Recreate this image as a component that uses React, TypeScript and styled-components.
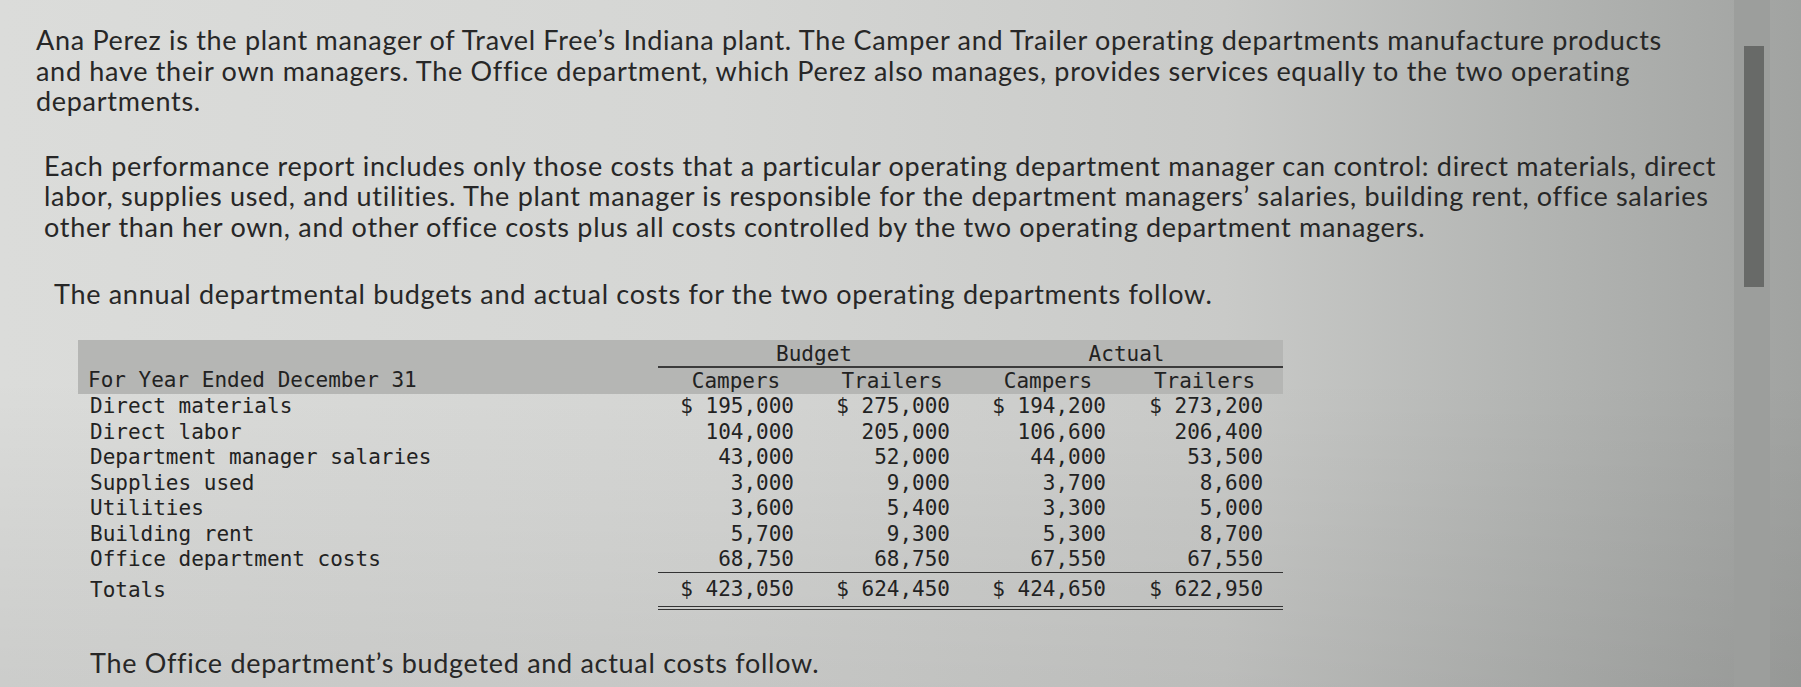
import styled, { createGlobalStyle } from 'styled-components';

const GlobalStyle = createGlobalStyle`
  html, body {
    margin: 0;
    padding: 0;
    overflow: hidden;
  }
`;

const Page = styled.div`
  width: 1801px;
  height: 687px;
  display: flex;
  background:
    linear-gradient(180deg, rgba(0, 0, 0, 0) 55%, rgba(0, 0, 0, 0.07) 100%),
    linear-gradient(90deg, #dbdcda 0%, #d5d6d4 40%, #c9cac8 68%, #b3b5b3 85%, #a1a3a1 100%);
  color: #262626;
`;

const Main = styled.div`
  flex: 1;
  padding: 25px 0 0 36px;
`;

const Paragraph = styled.p<{ $indent: number; $gap: number }>`
  margin: ${(p) => p.$gap}px 0 0 ${(p) => p.$indent}px;
  font-family: Lato, 'Open Sans', sans-serif;
  font-size: 27px;
  letter-spacing: 0.7px;
  line-height: 30.5px;
  white-space: nowrap;
  color: #272727;
`;

const ReportTable = styled.table`
  margin: 30px 0 0 42px;
  width: 1205px;
  table-layout: fixed;
  border-collapse: collapse;
  font-family: 'DejaVu Sans Mono', 'Liberation Mono', monospace;
  font-size: 21px;
  color: #222;
`;

const HeadRow = styled.tr`
  height: 27px;
  background: #b5b6b4;
`;

const GroupCell = styled.th`
  font-weight: normal;
  text-align: center;
  padding: 0;
  border-bottom: 2px solid #3b3b3b;
  vertical-align: bottom;
`;

const ColumnCell = styled.th`
  font-weight: normal;
  text-align: center;
  padding: 0;
`;

const CaptionCell = styled.th`
  font-weight: normal;
  text-align: left;
  padding: 0 0 0 10px;
  white-space: nowrap;
`;

const Row = styled.tr<{ $total?: boolean }>`
  height: ${(p) => (p.$total ? 36 : 25.5)}px;
`;

const Label = styled.td`
  padding: 0 0 0 12px;
  white-space: nowrap;
`;

const Amount = styled.td<{ $total?: boolean }>`
  padding: 0 20px 0 0;
  text-align: right;
  white-space: pre;
  border-top: ${(p) => (p.$total ? '1.5px solid #333' : 'none')};
  border-bottom: ${(p) => (p.$total ? '4px double #333' : 'none')};
`;

const ScrollArea = styled.div`
  width: 36px;
  margin-right: 31px;
  background: #9c9e9c;
`;

const Thumb = styled.div`
  margin: 46px 0 0 10px;
  width: 20px;
  height: 241px;
  background: #686a68;
`;

const rows: [string, string[]][] = [
  ['Direct materials', ['$ 195,000', '$ 275,000', '$ 194,200', '$ 273,200']],
  ['Direct labor', ['104,000', '205,000', '106,600', '206,400']],
  ['Department manager salaries', ['43,000', '52,000', '44,000', '53,500']],
  ['Supplies used', ['3,000', '9,000', '3,700', '8,600']],
  ['Utilities', ['3,600', '5,400', '3,300', '5,000']],
  ['Building rent', ['5,700', '9,300', '5,300', '8,700']],
  ['Office department costs', ['68,750', '68,750', '67,550', '67,550']],
];

const totals = ['$ 423,050', '$ 624,450', '$ 424,650', '$ 622,950'];

const App = () => {
  return (
    <Page>
      <GlobalStyle />
      <Main>
        <Paragraph $indent={0} $gap={0}>
          Ana Perez is the plant manager of Travel Free’s Indiana plant. The Camper and Trailer operating departments manufacture products
          <br />
          and have their own managers. The Office department, which Perez also manages, provides services equally to the two operating
          <br />
          departments.
        </Paragraph>
        <Paragraph $indent={8} $gap={34}>
          Each performance report includes only those costs that a particular operating department manager can control: direct materials, direct
          <br />
          labor, supplies used, and utilities. The plant manager is responsible for the department managers’ salaries, building rent, office salaries
          <br />
          other than her own, and other office costs plus all costs controlled by the two operating department managers.
        </Paragraph>
        <Paragraph $indent={18} $gap={37}>
          The annual departmental budgets and actual costs for the two operating departments follow.
        </Paragraph>

        <ReportTable>
          <colgroup>
            <col style={{ width: 580 }} />
            <col style={{ width: 156 }} />
            <col style={{ width: 156 }} />
            <col style={{ width: 156 }} />
            <col style={{ width: 157 }} />
          </colgroup>
          <thead>
            <HeadRow>
              <CaptionCell />
              <GroupCell colSpan={2}>Budget</GroupCell>
              <GroupCell colSpan={2}>Actual</GroupCell>
            </HeadRow>
            <HeadRow>
              <CaptionCell>For Year Ended December 31</CaptionCell>
              <ColumnCell>Campers</ColumnCell>
              <ColumnCell>Trailers</ColumnCell>
              <ColumnCell>Campers</ColumnCell>
              <ColumnCell>Trailers</ColumnCell>
            </HeadRow>
          </thead>
          <tbody>
            {rows.map(([label, values]) => (
              <Row key={label}>
                <Label>{label}</Label>
                {values.map((v, i) => (
                  <Amount key={i}>{v}</Amount>
                ))}
              </Row>
            ))}
            <Row $total>
              <Label>Totals</Label>
              {totals.map((v, i) => (
                <Amount key={i} $total>
                  {v}
                </Amount>
              ))}
            </Row>
          </tbody>
        </ReportTable>

        <Paragraph $indent={54} $gap={38}>
          The Office department’s budgeted and actual costs follow.
        </Paragraph>
      </Main>
      <ScrollArea>
        <Thumb />
      </ScrollArea>
    </Page>
  );
};

export default App;
